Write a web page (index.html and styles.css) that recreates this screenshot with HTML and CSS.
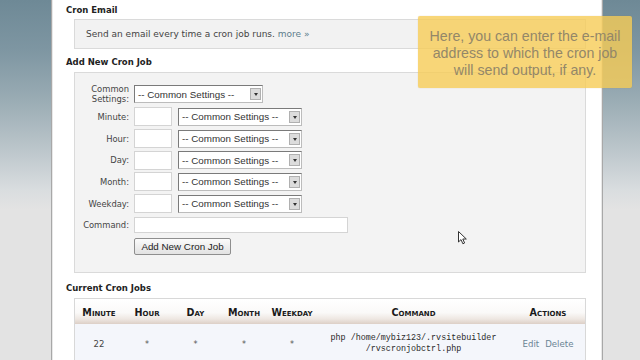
FILE: index.html
```html
<!DOCTYPE html>
<html>
<head>
<meta charset="utf-8">
<link rel="stylesheet" href="styles.css">
</head>
<body>
<div class="page">
  <div class="side"></div>
  <div class="panel">
    <h2 class="heading first">Cron Email</h2>
    <div class="box email-box">
      <span>Send an email every time a cron job runs. <a class="more">more »</a></span>
    </div>

    <h2 class="heading">Add New Cron Job</h2>
    <div class="box form-box">
      <div class="row row-first">
        <label class="lbl two">Common<br>Settings:</label>
        <div class="select wide"><span>-- Common Settings --</span><i class="drop"></i></div>
      </div>
      <div class="row">
        <label class="lbl">Minute:</label>
        <div class="input"></div>
        <div class="select"><span>-- Common Settings --</span><i class="drop"></i></div>
      </div>
      <div class="row">
        <label class="lbl">Hour:</label>
        <div class="input"></div>
        <div class="select"><span>-- Common Settings --</span><i class="drop"></i></div>
      </div>
      <div class="row">
        <label class="lbl">Day:</label>
        <div class="input"></div>
        <div class="select"><span>-- Common Settings --</span><i class="drop"></i></div>
      </div>
      <div class="row">
        <label class="lbl">Month:</label>
        <div class="input"></div>
        <div class="select"><span>-- Common Settings --</span><i class="drop"></i></div>
      </div>
      <div class="row">
        <label class="lbl">Weekday:</label>
        <div class="input"></div>
        <div class="select"><span>-- Common Settings --</span><i class="drop"></i></div>
      </div>
      <div class="row">
        <label class="lbl">Command:</label>
        <div class="input cmd"></div>
      </div>
      <div class="row">
        <label class="lbl"></label>
        <div class="button">Add New Cron Job</div>
      </div>
    </div>

    <h2 class="heading third">Current Cron Jobs</h2>
    <div class="box table-box">
      <div class="thead">
        <div>Minute</div><div>Hour</div><div>Day</div><div>Month</div><div>Weekday</div><div>Command</div><div>Actions</div>
      </div>
      <div class="trow">
        <div>22</div><div class="star">*</div><div class="star">*</div><div class="star">*</div><div class="star">*</div>
        <div class="mono">php /home/mybiz123/.rvsitebuilder<br>/rvscronjobctrl.php</div>
        <div class="actions"><a>Edit</a><a>Delete</a></div>
      </div>
    </div>
  </div>
  <div class="side right"></div>

  <div class="tooltip">Here, you can enter the e-mail<br>address to which the cron job<br>will send output, if any.</div>

  <svg class="cursor" width="11" height="14" viewBox="0 0 11 14">
    <path d="M0.5 0.5 L0.5 11 L3 8.6 L4.9 12.8 L6.6 12 L4.8 8 L8.3 8 Z" fill="#fff" stroke="#333" stroke-width="1"/>
  </svg>
</div>
</body>
</html>
```
FILE: styles.css
```css
* { box-sizing: border-box; }
html, body { margin: 0; padding: 0; }
body {
  width: 640px;
  height: 360px;
  overflow: hidden;
  font-family: "DejaVu Sans", Verdana, sans-serif;
  color: #333;
}
.page {
  position: relative;
  display: flex;
  width: 640px;
  height: 360px;
}
.side {
  width: 51px;
  flex: none;
  background: linear-gradient(#6e8996 0px, #7e96a2 50px, #9aacb4 100px, #bcc6cb 150px, #d9dddf 190px, #e3e3e3 210px, #e3e3e3 360px);
}
.side.right { width: 37px; }
.panel {
  width: 552px;
  flex: none;
  background: #fff;
  border-left: 1px solid #a8a8a8;
  border-right: 1px solid #a8a8a8;
  box-shadow: inset 1px 0 0 #e8e8e8, inset -1px 0 0 #e8e8e8;
  padding-left: 14px;
}
.heading {
  margin: 7px 0 0 0;
  font-size: 8.5px;
  line-height: 12px;
  font-weight: bold;
  color: #222;
}
.heading.first { margin-top: 4px; }
.heading.third { margin-top: 9px; }
.box {
  margin: 4px 0 0 8px;
  width: 512px;
  border: 1px solid #dadada;
}
.email-box {
  margin-top: 3px;
  height: 30px;
  background: #f2f2f2;
  display: flex;
  align-items: center;
  padding-left: 11px;
  font-size: 9px;
  color: #444;
}
.more { color: #5d7d8c; }
.form-box {
  height: 201px;
  background: #f3f3f3;
  padding-top: 10px;
}
.row {
  display: flex;
  align-items: center;
  height: 21.7px;
}
.row-first { height: 22px; margin-bottom: 1px; }
.lbl {
  width: 54px;
  margin-right: 5px;
  text-align: right;
  font-size: 8.4px;
  color: #444;
  line-height: 10px;
}
.input {
  width: 38px;
  height: 19px;
  background: #fff;
  border: 1px solid #d4d4d4;
  margin-right: 6px;
}
.input.cmd { width: 214px; height: 16px; }
.select {
  position: relative;
  width: 124px;
  height: 18px;
  background: #fff;
  border: 1px solid #bcbcbc;
  border-left-color: #7a7a7a;
  border-top-color: #7a7a7a;
  font-family: "Liberation Sans", Arial, sans-serif;
  font-size: 9.8px;
  color: #333;
  display: flex;
  align-items: center;
  padding-left: 3px;
}
.select.wide { width: 129px; }
.drop {
  position: absolute;
  right: 1px;
  top: 2px;
  width: 11px;
  height: 12px;
  background: #dcdcdc;
  border: 1px solid #b0b0b0;
}
.drop::after {
  content: "";
  position: absolute;
  left: 2.5px;
  top: 4px;
  border-left: 2.5px solid transparent;
  border-right: 2.5px solid transparent;
  border-top: 3px solid #333;
}
.button {
  width: 97px;
  height: 17px;
  border: 1px solid #8e8e8e;
  border-radius: 2px;
  background: linear-gradient(#fbfbfb, #e2e2e2);
  font-family: "Liberation Sans", Arial, sans-serif;
  font-size: 9.8px;
  color: #222;
  display: flex;
  align-items: center;
  justify-content: center;
}
.table-box {
  height: 70px;
  background: #f4f6fb;
  border-color: #d8d8d8;
}
.thead, .trow {
  display: grid;
  grid-template-columns: 48px 48px 49px 48px 48px 195px 74px;
  align-items: center;
  text-align: center;
}
.thead {
  height: 25px;
  background: linear-gradient(#ffffff 0%, #faf9f8 55%, #eee7e2 80%, #dccfc6 100%);
  font-weight: bold;
  font-variant: small-caps;
  font-size: 9.6px;
  color: #1a1a1a;
  padding-top: 2px;
}
.trow {
  height: 40px;
  font-size: 8.5px;
  color: #444;
}
.star { font-size: 8px; color: #555; }
.mono {
  font-family: "Liberation Mono", "Courier New", monospace;
  font-size: 8.4px;
  line-height: 11px;
  color: #2a2a2a;
}
.actions a {
  color: #6a8494;
  margin: 0 3px;
  font-size: 8.6px;
}
.tooltip {
  position: absolute;
  left: 418px;
  top: 16px;
  width: 214px;
  height: 72px;
  padding-top: 12px;
  background: rgba(246, 204, 86, 0.8);
  border-radius: 2px;
  box-shadow: 0 0 1px rgba(150, 120, 40, 0.4);
  font-family: "Liberation Sans", Arial, sans-serif;
  font-size: 14.2px;
  line-height: 17px;
  text-align: center;
  color: #938769;
}
.cursor {
  position: absolute;
  left: 458px;
  top: 231px;
}
```
